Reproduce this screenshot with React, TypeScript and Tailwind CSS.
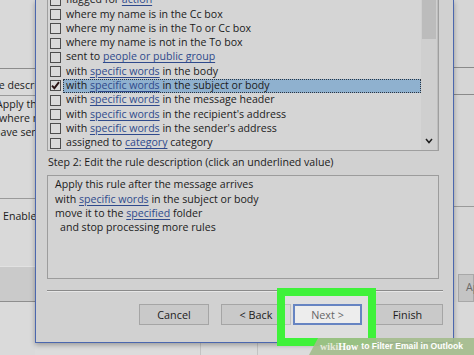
import React from "react";

type Part = { t: string; link?: boolean };

const rules: Part[][] = [
  [{ t: "flagged for " }, { t: "action", link: true }],
  [{ t: "where my name is in the Cc box" }],
  [{ t: "where my name is in the To or Cc box" }],
  [{ t: "where my name is not in the To box" }],
  [{ t: "sent to " }, { t: "people or public group", link: true }],
  [{ t: "with " }, { t: "specific words", link: true }, { t: " in the body" }],
  [{ t: "with " }, { t: "specific words", link: true }, { t: " in the subject or body" }],
  [{ t: "with " }, { t: "specific words", link: true }, { t: " in the message header" }],
  [{ t: "with " }, { t: "specific words", link: true }, { t: " in the recipient's address" }],
  [{ t: "with " }, { t: "specific words", link: true }, { t: " in the sender's address" }],
  [{ t: "assigned to " }, { t: "category", link: true }, { t: " category" }],
];

const Text = ({ parts }: { parts: Part[] }) => (
  <span>
    {parts.map((p, i) =>
      p.link ? (
        <span key={i} className="text-[#2f4a8c] underline underline-offset-[2px] decoration-[#2f4a8c]">
          {p.t}
        </span>
      ) : (
        <span key={i}>{p.t}</span>
      )
    )}
  </span>
);

const CheckIcon = () => (
  <svg width="9" height="9" viewBox="0 0 9 9">
    <path d="M1 4.6 L3.4 7.2 L8 1.2" fill="none" stroke="#2a1414" strokeWidth="1.9" />
  </svg>
);

const RuleRow = ({ parts, selected }: { parts: Part[]; selected?: boolean }) => (
  <div className="flex items-center h-[14.3px] pl-[2px]">
    <span className="w-[11px] h-[11px] shrink-0 border border-[#4d4d4d] bg-[#dadada] flex items-center justify-center">
      {selected && <CheckIcon />}
    </span>
    {selected ? (
      <div className="ml-[2px] pl-[2px] flex-1 h-[14px] flex items-center bg-[#8fb1cf] border border-dotted border-[#2b3440] whitespace-nowrap">
        <Text parts={parts} />
      </div>
    ) : (
      <div className="ml-[5px] whitespace-nowrap">
        <Text parts={parts} />
      </div>
    )}
  </div>
);

const Button = ({ label, w, focus }: { label: string; w: string; focus?: boolean }) => (
  <button
    className={`${w} h-[21px] flex items-center justify-center text-[10.8px] text-[#1b1b1b] ${
      focus ? "bg-[#e6e6e6] border-2 border-[#2450a8]" : "bg-[#c9c9c9] border border-[#a5a5a5]"
    }`}
  >
    {label}
  </button>
);

export default function App() {
  return (
    <div className="w-[474px] h-[355px] relative overflow-hidden bg-[#d8d8d8] text-[#1b1b1b] text-[10.6px] font-['Open_Sans',sans-serif]">
      <div className="flex h-full">
        {/* left strip of the window behind */}
        <div className="w-[35px] shrink-0 flex flex-col overflow-hidden whitespace-nowrap bg-[#d9d9d9]">
          <div className="h-[69px] shrink-0 border-b border-[#8c8c8c]" />
          <div className="h-[26px] shrink-0 flex items-end pb-[1px] ml-[-17px]">Rule description</div>
          <div className="h-[104px] shrink-0 border-y border-[#9a9a9a] flex flex-col">
            <div className="h-[14px] leading-[14px] mt-[1px] ml-[-4px]">Apply this rule</div>
            <div className="h-[14px] leading-[14px] ml-[-1px]">where my name</div>
            <div className="h-[14px] leading-[14px] ml-[-6px]">have sent</div>
          </div>
          <div className="h-[26px] shrink-0 flex items-end pl-[3px]">Enable</div>
          <div className="h-[41px] shrink-0" />
          <div className="h-[36px] shrink-0 bg-[#cacaca] border-t border-[#e2e2e2] border-b border-b-[#8e8e8e]" />
          <div className="flex-1 bg-[#dadada]" />
        </div>

        {/* dialog column */}
        <div className="w-[419px] shrink-0 flex flex-col">
          <div className="h-[343px] shrink-0 bg-[#d1d1d1] border-x border-b border-[#4b67ae] shadow-[0_2px_5px_rgba(0,0,0,0.3)] pl-[11px] pr-[14px] flex flex-col relative z-10">
            {/* conditions list */}
            <div className="mt-[-9px] border border-[#9e9e9e] bg-[#d5d5d5] flex">
              <div className="flex-1 pt-[1px]">
                {rules.map((r, i) => (
                  <RuleRow key={i} parts={r} selected={i === 6} />
                ))}
              </div>
              <div className="w-[17px] shrink-0 bg-[#cfcfcf] border-r border-[#bdbdbd] flex flex-col">
                <div className="h-[47px] mx-[1px] bg-[#bcbcbc]" />
                <div className="flex-1" />
                <div className="h-[16px] flex items-center justify-center pb-[2px]">
                  <svg width="8" height="6" viewBox="0 0 8 6">
                    <path d="M1 1 L4 4.5 L7 1" fill="none" stroke="#1e1e1e" strokeWidth="1.5" />
                  </svg>
                </div>
              </div>
            </div>

            <div className="mt-[4px] h-[15px] leading-[15px] pl-[1px] whitespace-nowrap">
              Step 2: Edit the rule description (click an underlined value)
            </div>

            {/* description */}
            <div className="mt-[5px] h-[104px] border border-[#9c9c9c] bg-[#d3d3d3] pl-[7px] pt-[1px] whitespace-nowrap">
              <div className="h-[14.3px] leading-[14.3px]">Apply this rule after the message arrives</div>
              <div className="h-[14.3px] leading-[14.3px]">
                <Text parts={[{ t: "with " }, { t: "specific words", link: true }, { t: " in the subject or body" }]} />
              </div>
              <div className="h-[14.3px] leading-[14.3px]">
                <Text parts={[{ t: "move it to the " }, { t: "specified", link: true }, { t: " folder" }]} />
              </div>
              <div className="h-[14.3px] leading-[14.3px] pl-[5px]">and stop processing more rules</div>
            </div>

            <div className="mt-[11px] mr-[-4px] border-t border-[#8a8a8a] border-b border-b-[#e6e6e6]" />

            <div className="mt-[12px] mr-[-4px] flex justify-end">
              <Button label="Cancel" w="w-[70px]" />
              <div className="w-[12px]" />
              <Button label="< Back" w="w-[70px]" />
              <div className="w-[2px]" />
              <Button label="Next >" w="w-[69px]" focus />
              <div className="w-[10px]" />
              <Button label="Finish" w="w-[71px]" />
            </div>
          </div>
          <div className="flex-1 flex bg-[#dcdcdc]">
            <div className="w-[165px]" />
            <div className="w-[58px] border-x border-[#c3c3c3]" />
          </div>
        </div>

        {/* right strip of the window behind */}
        <div className="flex-1 flex flex-col bg-[#d6d6d6] overflow-hidden whitespace-nowrap">
          <div className="h-[68px] shrink-0 border-b border-[#8a8a8a]" />
          <div className="h-[27px] shrink-0 border-b border-[#8a8a8a]" />
          <div className="h-[112px] shrink-0 border-b border-[#9a9a9a]" />
          <div className="h-[67px] shrink-0" />
          <div className="h-[28px] shrink-0 ml-[4px] bg-[#c4c4c4] border border-[#a8a8a8] flex items-center pl-[7px] text-[#6a6a6a]">
            Apply
          </div>
          <div className="flex-1 bg-[#d9d9d9]" />
        </div>
      </div>

      {/* green highlight */}
      <div className="absolute left-[277px] top-[288px] w-[99px] h-[58px] border-[8px] border-[#3ff23a] bg-white/30 z-20" />

      {/* watermark */}
      <div className="absolute right-0 bottom-0 w-[165px] h-[17px] bg-[#a3bb8c]/90 [clip-path:polygon(9px_0,100%_0,100%_100%,0_100%)] flex items-center pl-[11px] whitespace-nowrap z-30">
        <span className="font-['Liberation_Serif',serif] font-bold text-[10px] text-[#e3ead8]">wiki</span>
        <span className="font-['Liberation_Serif',serif] font-bold text-[10px] text-white">How</span>
        <span className="font-['Liberation_Sans',sans-serif] font-bold text-[8.6px] text-white ml-[3px]">to Filter Email in Outlook</span>
      </div>
    </div>
  );
}
